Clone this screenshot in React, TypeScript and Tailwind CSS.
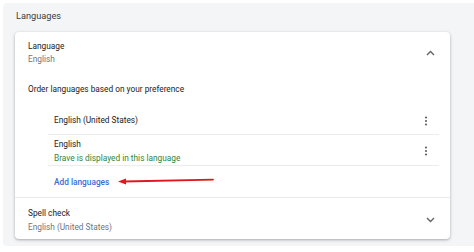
import React from "react";

const Kebab = () => (
  <svg width="4" height="10" viewBox="0 0 4 10" className="block">
    <circle cx="2" cy="1.5" r="1.1" fill="#5f6368" />
    <circle cx="2" cy="5" r="1.1" fill="#5f6368" />
    <circle cx="2" cy="8.5" r="1.1" fill="#5f6368" />
  </svg>
);

const Chevron = ({ up }: { up?: boolean }) => (
  <svg width="9" height="6" viewBox="0 0 9 6" className="block">
    <path
      d={up ? "M1 5 L4.5 1.5 L8 5" : "M1 1 L4.5 4.5 L8 1"}
      stroke="#5f6368"
      strokeWidth="1.4"
      fill="none"
    />
  </svg>
);

export default function App() {
  return (
    <div
      className="w-[474px] h-[252px] bg-white pt-[3px] pl-[3px] overflow-hidden"
      style={{ fontFamily: "Roboto, 'Liberation Sans', sans-serif" }}
    >
      <div className="relative h-[243px] w-[471px] rounded-l-[4px] bg-[#f4f5f7] pl-[12px]">
        <div className="h-[29px] pb-[4px] flex items-center pl-[1px] text-[9.2px] text-[#3c4043]">
          Languages
        </div>
        <div className="w-[435px] h-[207px] bg-white rounded-[4px] shadow-[0_1px_2px_rgba(60,64,67,0.25),0_1px_3px_1px_rgba(60,64,67,0.12)] flex flex-col">
          <div className="h-[40px] pt-[2px] flex items-center pl-[13px] pr-[15px]">
            <div className="flex-1 flex flex-col text-[8.3px] leading-[13px]">
              <span className="text-[#202124]">Language</span>
              <span className="text-[#70757a]">English</span>
            </div>
            <Chevron up />
          </div>
          <div className="h-[33px] pt-[1px] flex items-center pl-[13px] text-[8.3px] text-[#202124]">
            Order languages based on your preference
          </div>
          <div className="ml-[33px] mr-[11px] flex flex-col">
            <div className="h-[30px] pt-[2px] flex items-center pl-[6px] pr-[11px] border-b border-[#ececec]">
              <span className="flex-1 text-[8.3px] text-[#202124]">English (United States)</span>
              <Kebab />
            </div>
            <div className="h-[31px] pt-[1px] flex items-center pl-[6px] pr-[11px] border-b border-[#ececec]">
              <div className="flex-1 flex flex-col text-[8.3px] leading-[14px]">
                <span className="text-[#202124]">English</span>
                <span className="text-[#2e8540]">Brave is displayed in this language</span>
              </div>
              <Kebab />
            </div>
            <div className="h-[31px] pt-[2px] flex items-center pl-[6px]">
              <span className="text-[8.3px] text-[#3a6bd6] font-medium">Add languages</span>
            </div>
          </div>
          <div className="border-t border-[#ececec] flex-1 pt-[2px] flex items-center pl-[13px] pr-[15px]">
            <div className="flex-1 flex flex-col text-[8.3px] leading-[14px]">
              <span className="text-[#202124]">Spell check</span>
              <span className="text-[#70757a]">English (United States)</span>
            </div>
            <Chevron />
          </div>
        </div>
        <svg
          className="absolute left-[112px] top-[172px]"
          width="102"
          height="12"
          viewBox="0 0 102 12"
        >
          <path d="M9 6.5 L98 4.6" stroke="#e0161b" strokeWidth="1.8" fill="none" strokeLinecap="round" />
          <path d="M3 6.6 L11 3.4 L11 9.6 Z" fill="#e0161b" />
        </svg>
      </div>
    </div>
  );
}
